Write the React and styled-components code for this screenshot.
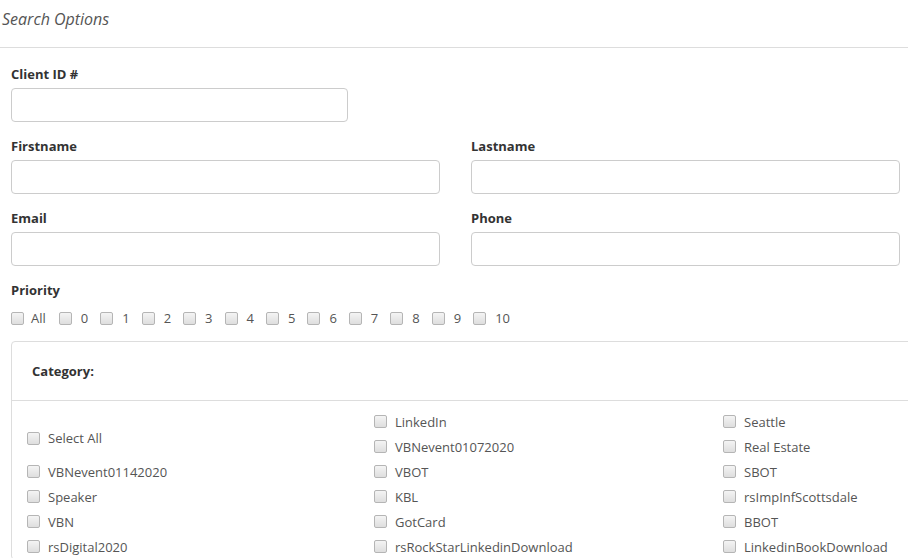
import React from "react";
import styled, { createGlobalStyle } from "styled-components";

const G = createGlobalStyle`
  body { margin:0; font-family:"Open Sans", sans-serif; color:#333; background:#fff; overflow:hidden; }
`;
const Header = styled.div`height:48px; border-bottom:1px solid #ddd; display:flex; align-items:center; padding:0 0 10px 2px; box-sizing:border-box;`;
const Title = styled.h3`margin:0; font-size:16px; font-style:italic; font-weight:400; color:#555;`;
const Body = styled.div`padding:17px 8px 0 11px;`;
const Row = styled.div`display:grid; grid-template-columns:${p => p.cols || "1fr 1fr"}; column-gap:31px; margin-bottom:15px;`;
const Field = styled.div`display:flex; flex-direction:column;`;
const Label = styled.label`font-size:13px; font-weight:700; color:#333; line-height:18px; margin-bottom:5px;`;
const Input = styled.input`height:34px; box-sizing:border-box; border:1px solid #ccc; border-radius:4px; width:${p => p.w || "100%"};`;
const Checks = styled.div`display:flex; align-items:center; margin-top:6px;`;
const CheckItem = styled.label`display:flex; align-items:center; font-size:13px; color:#555; margin-right:${p => p.mr || 0}px; height:${p => p.h || 25}px; padding-top:${p => p.pt || 0}px; box-sizing:border-box;`;
const Box = styled.span`width:11px; height:11px; border:1px solid #b5b5b5; border-radius:2px; background:linear-gradient(#f4f4f4,#dedede); margin-right:${p => p.gap || 9}px; flex:none;`;
const Panel = styled.div`border:1px solid #ddd; border-radius:4px; margin-top:15px; margin-right:-40px;`;
const PanelHead = styled.div`height:59px; border-bottom:1px solid #ddd; display:flex; align-items:center; padding-left:20px; font-size:13px; font-weight:700; box-sizing:border-box;`;
const Grid = styled.div`display:grid; grid-template-columns:347px 349px 1fr; padding:8px 0 0 15px;`;
const Col = styled.div`display:flex; flex-direction:column;`;

const C = ({ children, h, pt }) => <CheckItem h={h} pt={pt}><Box gap={8} />{children}</CheckItem>;

export default function App() {
  const pr = ["All","0","1","2","3","4","5","6","7","8","9","10"];
  return (
    <>
      <G />
      <Header><Title>Search Options</Title></Header>
      <Body>
        <Row cols="337px 1fr"><Field><Label>Client ID #</Label><Input /></Field></Row>
        <Row><Field><Label>Firstname</Label><Input /></Field><Field><Label>Lastname</Label><Input /></Field></Row>
        <Row><Field><Label>Email</Label><Input /></Field><Field><Label>Phone</Label><Input /></Field></Row>
        <Field>
          <Label>Priority</Label>
          <Checks>{pr.map(p => <CheckItem key={p} h={16} mr={p === "All" ? 13 : 12}><Box gap={p==="All"?7:9} />{p}</CheckItem>)}</Checks>
        </Field>
        <Panel>
          <PanelHead>Category:</PanelHead>
          <Grid>
            <Col><C h={50} pt={8}>Select All</C><C>VBNevent01142020</C><C>Speaker</C><C>VBN</C><C>rsDigital2020</C></Col>
            <Col><C>LinkedIn</C><C>VBNevent01072020</C><C>VBOT</C><C>KBL</C><C>GotCard</C><C>rsRockStarLinkedinDownload</C></Col>
            <Col><C>Seattle</C><C>Real Estate</C><C>SBOT</C><C>rsImpInfScottsdale</C><C>BBOT</C><C>LinkedinBookDownload</C></Col>
          </Grid>
        </Panel>
      </Body>
    </>
  );
}
